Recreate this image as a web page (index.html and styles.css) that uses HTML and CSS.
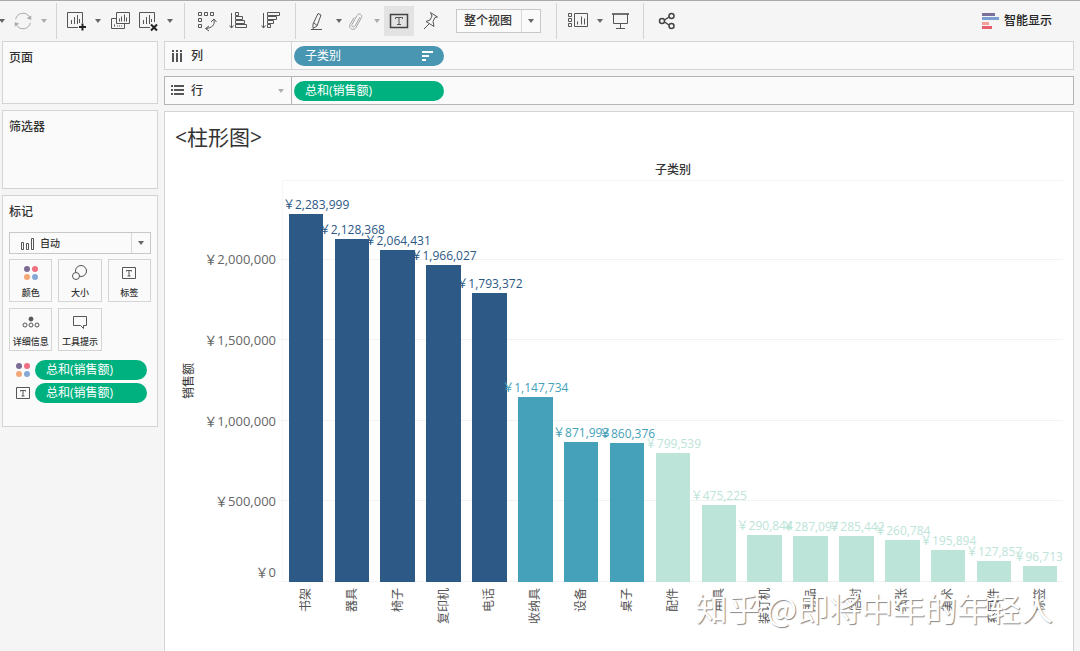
FILE: index.html
```html
<!DOCTYPE html>
<html lang="zh-CN">

<head>
  <meta charset="utf-8">
  <meta name="viewport" content="width=device-width, initial-scale=1">
  <title>柱形图</title>
  <link rel="stylesheet" href="styles.css">
</head>

<body>
  <header class="toolbar">
    <div class="group history">
      <button class="caret" aria-label="重做选项"></button>
      <button class="icon faded" aria-label="刷新">
        <svg viewBox="0 0 24 24"><path d="M4 10a8.200 8.200 0 0 1 15-2.500M20 14a8.200 8.200 0 0 1-15 2.500" /><path class="fill" d="M21 6v5l-5-2zM3 18v-5l5 2z" /></svg>
      </button>
      <button class="caret faded" aria-label="刷新选项"></button>
    </div>
    <div class="group sheets">
      <button class="icon" aria-label="新建工作表">
        <svg viewBox="0 0 24 24"><path d="M14 18.500H3.500v-15h15V14M7.500 15v-4M10.500 15V8M13.500 15V6M15.500 14v-4" /><path class="thick" d="M15 18h7M18.500 14.500v7" /></svg>
      </button>
      <button class="caret" aria-label="新建选项"></button>
      <button class="icon" aria-label="复制">
        <svg viewBox="0 0 24 24"><path d="M8.500 3.500h13v11h-13zM11.500 12.500v-3M13.500 12.500v-5M16.500 12.500v-7M18.500 12.500v-4M8.500 9.500h-5v10h13v-5M6.500 17.500v-2M9.500 17.500v-1M11.500 17.500v-1M13.500 17.500v-1" /></svg>
      </button>
      <button class="icon" aria-label="清除工作表">
        <svg viewBox="0 0 24 24"><path d="M14 18.500H3.500v-15h15V13M7.500 15v-4M10.500 15V8M13.500 15V6M15.500 13v-3" /><path class="thick" d="M15 15.500l6 6M21 15.500l-6 6" /></svg>
      </button>
      <button class="caret" aria-label="清除选项"></button>
    </div>
    <div class="group sorting">
      <button class="icon" aria-label="交换行和列">
        <svg viewBox="0 0 24 24"><path d="M3.500 3.500h3v3h-3zM9.500 3.500h3v3h-3zM15.500 3.500h3v3h-3zM3.500 9.500h3v3h-3zM3.500 15.500h3v3h-3zM19 11c1 5-2 8-8 8.500M16 13l3-3 2.500 3M14 17l-3.500 2.500L14 22" /></svg>
      </button>
      <button class="icon" aria-label="升序排序">
        <svg viewBox="0 0 24 24"><path d="M4.500 4v15M2.500 16.500l2 2.500 2-2.500M8.500 3.500h3v3h-3zM8.500 7.500h7v3h-7zM8.500 11.500h9v3h-9zM8.500 15.500h11v3h-11z" /></svg>
      </button>
      <button class="icon" aria-label="降序排序">
        <svg viewBox="0 0 24 24"><path d="M4.500 4v15M2.500 16.500l2 2.500 2-2.500M8.500 3.500h12v3h-12zM8.500 7.500h9v3h-9zM8.500 11.500h6v3h-6zM8.500 15.500h3v3h-3z" /></svg>
      </button>
    </div>
    <div class="group format">
      <button class="icon" aria-label="突出显示">
        <svg viewBox="0 0 24 24"><path d="M10 4.500l3 1.500-4 11-4 2.500V15zM6 14l3 2.500M3 20.500h11" /></svg>
      </button>
      <button class="caret" aria-label="突出显示选项"></button>
      <button class="icon faded" aria-label="组成员">
        <svg viewBox="0 0 24 24"><path d="M14 8l-5 9c-1 2-4 .5-3-1.500l5-9c1.500-3 6-1 4.500 2l-5.500 10c-2 4-8 1-6-3l4-7" /></svg>
      </button>
      <button class="caret faded" aria-label="组选项"></button>
      <button class="icon pressed" aria-label="显示标记标签" aria-pressed="true">
        <svg viewBox="0 0 24 24"><path class="frame" d="M3.500 5.500h17v13h-17z" /><path d="M8.500 10V8.500h7V10M12 8.500V16M10 15.500h4" /></svg>
      </button>
      <button class="icon" aria-label="固定轴">
        <svg viewBox="0 0 24 24"><path d="M14.500 3.500l7 4.500-2.500.5-2 4 1 5-8-5 4-1.500 2-4zM13 15l-5 5" /></svg>
      </button>
      <label class="dropdown fit">
        <select aria-label="适合">
          <option>整个视图</option>
          <option>标准</option>
        </select>
      </label>
    </div>
    <div class="group present">
      <button class="icon" aria-label="显示/隐藏卡">
        <svg viewBox="0 0 24 24"><path d="M1.500 4.500h3v3h-3zM1.500 9.500h3v3h-3zM1.500 14.500h3v3h-3zM7.500 4.500h13v13h-13zM10.500 15.500v-3M14.500 15.500v-8M17.500 15.500v-6" /></svg>
      </button>
      <button class="caret" aria-label="卡选项"></button>
      <button class="icon" aria-label="演示模式">
        <svg viewBox="0 0 24 24"><path class="frame" d="M3 5h17" /><path d="M4.500 5v9.500h14V5M11.500 15v5M7 19.500h9" /></svg>
      </button>
    </div>
    <div class="group share">
      <button class="icon" aria-label="共享">
        <svg class="frame" viewBox="0 0 24 24"><circle cx="7" cy="12" r="2.500" /><circle cx="16.500" cy="7" r="2.500" /><circle cx="16.500" cy="17" r="2.500" /><path d="M9.500 11l4.500-3M9.500 13l4.500 3" /></svg>
      </button>
    </div>
    <button class="show-me">
      <svg viewBox="0 0 17 16"><path fill="#7c6f98" d="M0 0h13v3H0z" /><path fill="#7b9fd0" d="M0 4h17v3H0z" /><path fill="#f4a09a" d="M0 9h7v3H0z" /><path fill="#e8616c" d="M0 13h10v3H0z" /></svg>
      智能显示
    </button>
  </header>

  <div class="workspace">
    <aside class="cards">
      <section class="card pages">
        <h2>页面</h2>
      </section>
      <section class="card filters">
        <h2>筛选器</h2>
      </section>
      <section class="card marks">
        <h2>标记</h2>
        <label class="dropdown mark-type">
          <svg viewBox="0 0 15 13"><path d="M1.500 5.500h2v7h-2zM6.500 6.500h2v6h-2zM11.500 1.500h2v11h-2z" /></svg>
          <select aria-label="标记类型">
            <option>自动</option>
            <option>条形图</option>
          </select>
        </label>
        <div class="mark-buttons">
          <button>
            <svg class="dots" viewBox="0 0 18 18"><circle cx="5" cy="5" r="3" fill="#7a6c93" /><circle cx="13" cy="5" r="3" fill="#ee7082" /><circle cx="5" cy="13" r="3" fill="#f3a777" /><circle cx="13" cy="13" r="3" fill="#86a8d4" /></svg>
            颜色
          </button>
          <button>
            <svg viewBox="0 0 18 18"><circle cx="10" cy="7" r="5.500" /><circle class="paper" cx="5" cy="12" r="3.500" /></svg>
            大小
          </button>
          <button>
            <svg viewBox="0 0 18 18"><path d="M2.500 3.500h13v11h-13zM6.500 7.500v-1h5v1M9 6.500V12M7.500 12h3" /></svg>
            标签
          </button>
          <button>
            <svg viewBox="0 0 18 18"><circle class="solid" cx="9" cy="6" r="2" /><circle cx="3" cy="12" r="2" /><circle cx="9" cy="12" r="2" /><circle cx="15" cy="12" r="2" /></svg>
            详细信息
          </button>
          <button>
            <svg viewBox="0 0 18 18"><path d="M2.500 3.500h13v9h-3v3l-3-3h-7z" /></svg>
            工具提示
          </button>
        </div>
        <div class="encoding">
          <svg class="dots" viewBox="0 0 18 18"><circle cx="5" cy="5" r="3" fill="#7a6c93" /><circle cx="13" cy="5" r="3" fill="#ee7082" /><circle cx="5" cy="13" r="3" fill="#f3a777" /><circle cx="13" cy="13" r="3" fill="#86a8d4" /></svg>
          <button class="pill measure">总和(销售额)</button>
        </div>
        <div class="encoding">
          <svg viewBox="0 0 18 18"><path d="M2.500 3.500h13v11h-13zM6.500 7.500v-1h5v1M9 6.500V12M7.500 12h3" /></svg>
          <button class="pill measure">总和(销售额)</button>
        </div>
      </section>
    </aside>

    <main>
      <div class="shelf">
        <h2>
          <svg viewBox="0 0 14 14"><path d="M2 1v2M6 1v2M10 1v2M2 4v9M6 4v9M10 4v9" /></svg>
          列
        </h2>
        <button class="pill dimension">
          子类别
          <svg viewBox="0 0 12 12"><path d="M1 2h11M1 6h7M1 10h4" /></svg>
        </button>
      </div>
      <div class="shelf hover">
        <h2>
          <svg viewBox="0 0 14 14"><path d="M0 2h2M0 6h2M0 10h2M3 2h10M3 6h10M3 10h10" /></svg>
          行
          <span class="caret faded"></span>
        </h2>
        <button class="pill measure">总和(销售额)</button>
      </div>

      <section class="view">
        <h1>&lt;柱形图&gt;</h1>
        <div class="chart">
          <div class="column-title">子类别</div>
          <div class="row-title"><span>销售额</span></div>
          <div class="axis" id="axis"></div>
          <div class="plot">
            <div class="grid" id="grid"></div>
            <div class="bars" id="bars"></div>
          </div>
          <div class="categories" id="categories"></div>
        </div>
        <div class="watermark">知乎 @即将中年的年轻人</div>
      </section>
    </main>
  </div>

  <script>
    const sales = [
      ['书架', 2283999],
      ['器具', 2128368],
      ['椅子', 2064431],
      ['复印机', 1966027],
      ['电话', 1793372],
      ['收纳具', 1147734],
      ['设备', 871993],
      ['桌子', 860376],
      ['配件', 799539],
      ['用具', 475225],
      ['装订机', 290844],
      ['用品', 287097],
      ['信封', 285442],
      ['纸张', 260784],
      ['美术', 195894],
      ['系固件', 127857],
      ['标签', 96713]
    ];
    const max = 2490000;
    const step = 500000;

    function yen(n) {
      return '￥' + n.toLocaleString('en-US');
    }

    function level(n) {
      if (n > 1500000) return 'high';
      return n > 800000 ? 'mid' : 'low';
    }

    let bars = '';
    let categories = '';
    sales.forEach(([name, value]) => {
      bars += `<div class="bar ${level(value)}"><span>${yen(value)}</span><i style="height:${value / max * 100}%"></i></div>`;
      categories += `<div><span>${name}</span></div>`;
    });
    document.querySelector('#bars').innerHTML = bars;
    document.querySelector('#categories').innerHTML = categories;

    let ticks = '';
    let lines = '';
    for (let n = 0; n < max; n += step) {
      // the topmost interval is only partly shown
      let height = Math.min(step, max - n) / max * 100;
      ticks += `<div style="height:${height}%"><span>${yen(n)}</span></div>`;
      lines += `<div style="height:${height}%"></div>`;
    }
    document.querySelector('#axis').innerHTML = ticks;
    document.querySelector('#grid').innerHTML = lines;
  </script>
</body>

</html>
```

FILE: styles.css
```css
* {
  box-sizing: border-box;
}

body {
  margin: 0;
  height: 100vh;
  min-height: 600px;
  display: flex;
  flex-direction: column;
  overflow: hidden;
  background: #f5f5f5;
  color: #333;
  font: 12px/20px "Open Sans", "Noto Sans CJK SC", sans-serif;
}

button,
select {
  margin: 0;
  padding: 0;
  border: 0;
  background: none;
  color: inherit;
  font: inherit;
}

h1,
h2 {
  margin: 0;
}

h2 {
  font-size: 12px;
  font-weight: 500;
}

svg {
  display: block;
  flex: none;
  fill: none;
  stroke: #555;
  stroke-width: 1;
}

/* toolbar */

.toolbar {
  flex: none;
  display: flex;
  align-items: center;
  height: 41px;
  border-top: 1px solid #a9a9a9;
}

.group {
  display: flex;
  align-items: center;
  gap: 4px;
  height: 36px;
  border-right: 1px solid #d4d4d4;
}

.history {
  margin-left: -3px;
  padding-right: 7px;
}

.history svg {
  padding: 1px;
}

.sheets {
  padding: 0 8px 0 7px;
}

.sorting {
  gap: 8px;
  padding: 0 12px 0 10px;
}

.format {
  gap: 2px;
  padding: 0 15px 0 12px;
}

.present {
  padding: 0 10px;
}

.share {
  padding: 0 11px;
  border: 0;
}

.icon {
  display: flex;
  justify-content: center;
  align-items: center;
  width: 24px;
  height: 30px;
}

.icon svg {
  width: 24px;
  height: 24px;
}

.icon .thick {
  stroke: #222;
  stroke-width: 2;
}

.icon .frame {
  stroke: #444;
  stroke-width: 1.5;
}

.icon .fill {
  fill: #666;
  stroke: none;
}

.pressed {
  width: 30px;
  background: #e3e3e3;
}

.faded {
  opacity: 0.5;
}

.caret {
  width: 10px;
  height: 20px;
  display: flex;
  justify-content: center;
  align-items: center;
}

.sheets .caret {
  width: 12px;
}

.caret::after,
.dropdown::after {
  content: "";
  border: 3px solid transparent;
  border-top: 4px solid #666;
  border-bottom: 0;
}

.dropdown {
  display: flex;
  align-items: center;
  border: 1px solid #c8c8c8;
  background: #fafafa;
  font-weight: 500;
}

.dropdown select {
  flex: 1;
  align-self: stretch;
  appearance: none;
  border-right: 1px solid #d8d8d8;
}

.dropdown::after {
  margin: 0 6px;
}

.fit {
  width: 85px;
  height: 24px;
  margin-left: 14px;
}

.fit select {
  padding-left: 7px;
}

.show-me {
  display: flex;
  align-items: center;
  gap: 5px;
  margin-left: auto;
  padding-right: 28px;
  color: #222;
  font-weight: 500;
}

.show-me svg {
  width: 17px;
  height: 16px;
  stroke: none;
}

/* cards on the left */

.workspace {
  flex: 1;
  display: flex;
  gap: 6px;
  min-height: 0;
  padding: 0 6px 0 2px;
}

.cards {
  flex: none;
  width: 156px;
  display: flex;
  flex-direction: column;
  gap: 6px;
}

.card {
  padding: 6px;
  border: 1px solid #d4d4d4;
  background: #fafafa;
}

.pages {
  min-height: 63px;
}

.filters {
  min-height: 79px;
}

.marks {
  padding-bottom: 20px;
}

.mark-type {
  height: 22px;
  margin: 10px 0 5px;
  padding-left: 10px;
  font-size: 10px;
}

.mark-type svg {
  width: 15px;
  height: 13px;
}

.mark-type select {
  padding-left: 5px;
}

.mark-buttons {
  display: grid;
  grid-template-columns: repeat(3, 1fr);
  gap: 6px;
  margin-bottom: 9px;
}

.mark-buttons button {
  display: flex;
  flex-direction: column;
  align-items: center;
  gap: 3px;
  height: 43px;
  padding-top: 4px;
  border: 1px solid #d4d4d4;
  font-size: 9px;
  font-weight: 500;
  line-height: 16px;
  white-space: nowrap;
}

.mark-buttons svg,
.encoding svg {
  width: 18px;
  height: 18px;
}

svg.dots {
  stroke: none;
}

.solid {
  fill: #555;
}

.paper {
  fill: #fafafa;
}

.encoding {
  display: flex;
  align-items: center;
  gap: 3px;
  margin: 0 4px 3px 5px;
}

.pill {
  display: flex;
  justify-content: space-between;
  align-items: center;
  width: 150px;
  height: 20px;
  padding: 0 11px;
  border-radius: 10px;
  color: #fff;
  line-height: 20px;
}

.encoding .pill {
  flex: 1;
}

.measure {
  background: #00b180;
}

.dimension {
  background: #4996b2;
}

.pill svg {
  width: 12px;
  height: 12px;
  stroke: #fff;
  stroke-width: 2;
}

/* shelves */

main {
  flex: 1;
  min-width: 0;
  display: flex;
  flex-direction: column;
  gap: 6px;
}

.shelf {
  flex: none;
  display: flex;
  align-items: center;
  gap: 2px;
  height: 29px;
  border: 1px solid #d4d4d4;
  background: #fafafa;
}

.hover {
  border-color: #b4b4b4;
}

.shelf h2 {
  align-self: stretch;
  display: flex;
  align-items: center;
  gap: 6px;
  width: 127px;
  padding: 0 5px 0 6px;
  border-right: 1px solid #d4d4d4;
}

.hover h2 {
  border-color: #b4b4b4;
}

.shelf h2 svg {
  width: 14px;
  height: 14px;
  stroke-width: 2;
}

.shelf .caret {
  margin-left: auto;
}

/* chart */

.view {
  flex: 1;
  min-height: 0;
  display: flex;
  flex-direction: column;
  position: relative;
  border: 1px solid #d4d4d4;
  border-bottom: 0;
  background: #fff;
}

h1 {
  padding: 10px 10px 8px;
  font-size: 21px;
  font-weight: 400;
  line-height: 30px;
}

.chart {
  flex: 1;
  min-height: 0;
  display: grid;
  grid-template-columns: 20px 84px 1fr;
  grid-template-rows: 20px 1fr 69px;
  padding: 0 10px 0 14px;
}

.column-title {
  grid-column: 3;
  text-align: center;
  font-weight: 500;
}

.row-title {
  display: flex;
  justify-content: flex-end;
  align-items: center;
}

.row-title span,
.categories span {
  writing-mode: vertical-rl;
  text-orientation: sideways;
  transform: rotate(180deg);
  white-space: nowrap;
}

.axis,
.grid {
  display: flex;
  flex-direction: column-reverse;
}

.axis div {
  display: flex;
  justify-content: flex-end;
  align-items: flex-end;
  padding-right: 7px;
  color: #666;
  font-size: 13px;
}

.axis span {
  margin-bottom: -10px;
}

/* keep the zero label above the baseline */
.axis div:first-child span {
  margin-bottom: 0;
}

.plot {
  position: relative;
  border-top: 1px solid #f4f4f4;
}

.grid {
  position: absolute;
  inset: 0 0 0 -4px;
}

.grid div {
  border-bottom: 1px solid #f2f2f2;
}

.bars {
  position: absolute;
  inset: 0;
  display: flex;
  box-shadow: -1px 0 #f6f6f6;
}

.bar {
  flex: 1 1 0;
  min-width: 0;
  display: flex;
  flex-direction: column;
  justify-content: flex-end;
  align-items: center;
  line-height: 18px;
}

/* the outer labels stay inside the plot */
.bar:first-child span {
  align-self: flex-start;
}

.bar:last-child span {
  align-self: flex-end;
}

.bar i {
  flex: none;
  width: 75%;
  background: currentColor;
}

.bar span {
  position: relative;
  white-space: nowrap;
}

.high {
  color: #2c5985;
}

.mid {
  color: #45a1b9;
}

.low {
  color: #bce4d8;
}

.categories {
  grid-column: 3;
  display: flex;
  padding-top: 6px;
}

.categories div {
  flex: 1 1 0;
  display: flex;
  justify-content: center;
  align-items: flex-start;
  color: #555;
}

.watermark {
  position: absolute;
  right: 20px;
  bottom: 24px;
  color: #fff;
  font-family: "Noto Sans CJK SC", sans-serif;
  font-size: 32px;
  line-height: 40px;
  text-shadow: 1px 1px 1px #888;
  white-space: nowrap;
}
```
